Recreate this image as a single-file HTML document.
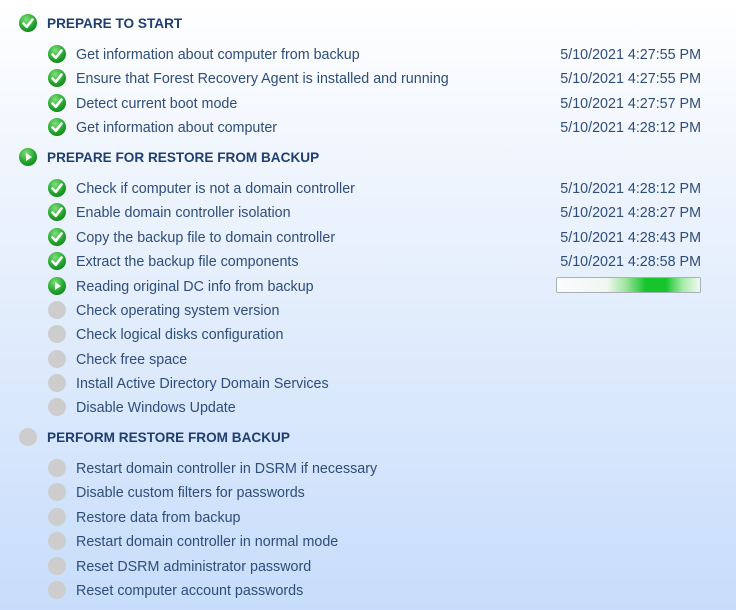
<!DOCTYPE html>
<html><head><meta charset="utf-8"><style>
html,body{margin:0;padding:0}
body{width:736px;height:610px;overflow:hidden;position:relative;background:linear-gradient(#ffffff 0%,#eef4fd 30%,#c7ddfb 100%);font-family:"Liberation Sans",sans-serif;color:#2e4d7a;font-size:14.3px}
.r{position:absolute;left:0;height:20px;line-height:20px;white-space:nowrap}
.i{position:absolute;top:0px;width:18px;height:18px;border-radius:50%}
.ok{background:radial-gradient(circle at 40% 30%,#7ee07a,#21a32a 55%,#0c6e18)}
.gr{background:#cdcdcd}
.t{position:absolute}
.h .t{font-weight:bold;color:#1f3f70;font-size:13.6px}
.d{position:absolute;left:555px;width:146px;text-align:right}
svg{position:absolute;left:0;top:0}
.pb{position:absolute;left:556px;top:277px;width:143px;height:14px;border:1px solid #a9b0b8;border-radius:2px;background:linear-gradient(90deg,#fafcff 0%,#f0f6f0 35%,#9fe4a0 48%,#16c52a 62%,#16c52a 76%,#a8eaab 88%,#f2f8f2 100%)}
</style></head><body>
<div id="c"></div>
<div class="pb"></div>
<script>
const rows=[
['h','ok','PREPARE TO START',13,''],
['i','ok','Get information about computer from backup',44,'5/10/2021 4:27:55 PM'],
['i','ok','Ensure that Forest Recovery Agent is installed and running',68,'5/10/2021 4:27:55 PM'],
['i','ok','Detect current boot mode',93,'5/10/2021 4:27:57 PM'],
['i','ok','Get information about computer',117,'5/10/2021 4:28:12 PM'],
['h','pl','PREPARE FOR RESTORE FROM BACKUP',147,''],
['i','ok','Check if computer is not a domain controller',178,'5/10/2021 4:28:12 PM'],
['i','ok','Enable domain controller isolation',202,'5/10/2021 4:28:27 PM'],
['i','ok','Copy the backup file to domain controller',227,'5/10/2021 4:28:43 PM'],
['i','ok','Extract the backup file components',251,'5/10/2021 4:28:58 PM'],
['i','pl','Reading original DC info from backup',276,''],
['i','gr','Check operating system version',300,''],
['i','gr','Check logical disks configuration',324,''],
['i','gr','Check free space',349,''],
['i','gr','Install Active Directory Domain Services',373,''],
['i','gr','Disable Windows Update',397,''],
['h','gr','PERFORM RESTORE FROM BACKUP',427,''],
['i','gr','Restart domain controller in DSRM if necessary',458,''],
['i','gr','Disable custom filters for passwords',482,''],
['i','gr','Restore data from backup',507,''],
['i','gr','Restart domain controller in normal mode',531,''],
['i','gr','Reset DSRM administrator password',556,''],
['i','gr','Reset computer account passwords',580,'']];
let h='';
for(const [k,ic,t,y,d] of rows){
 const ix=k=='h'?19:48, tx=k=='h'?47:76;
 let inner='';
 if(ic=='ok') inner='<svg width="18" height="18"><path d="M4.5 9.5 L7.8 12.8 L13.5 5.5" fill="none" stroke="#fff" stroke-width="2.6" stroke-linecap="round" stroke-linejoin="round"/></svg>';
 if(ic=='pl') inner='<svg width="18" height="18"><path d="M7 5 L13 9 L7 13 Z" fill="#fff"/></svg>';
 const cls=ic=='gr'?'gr':'ok';
 h+=`<div class="r ${k}" style="top:${y+1}px;width:736px"><div class="i ${cls}" style="left:${ix}px">${inner}</div><span class="t" style="left:${tx}px">${t}</span>${d?`<span class="d">${d}</span>`:''}</div>`;
}
document.getElementById('c').innerHTML=h;
</script>
</body></html>
